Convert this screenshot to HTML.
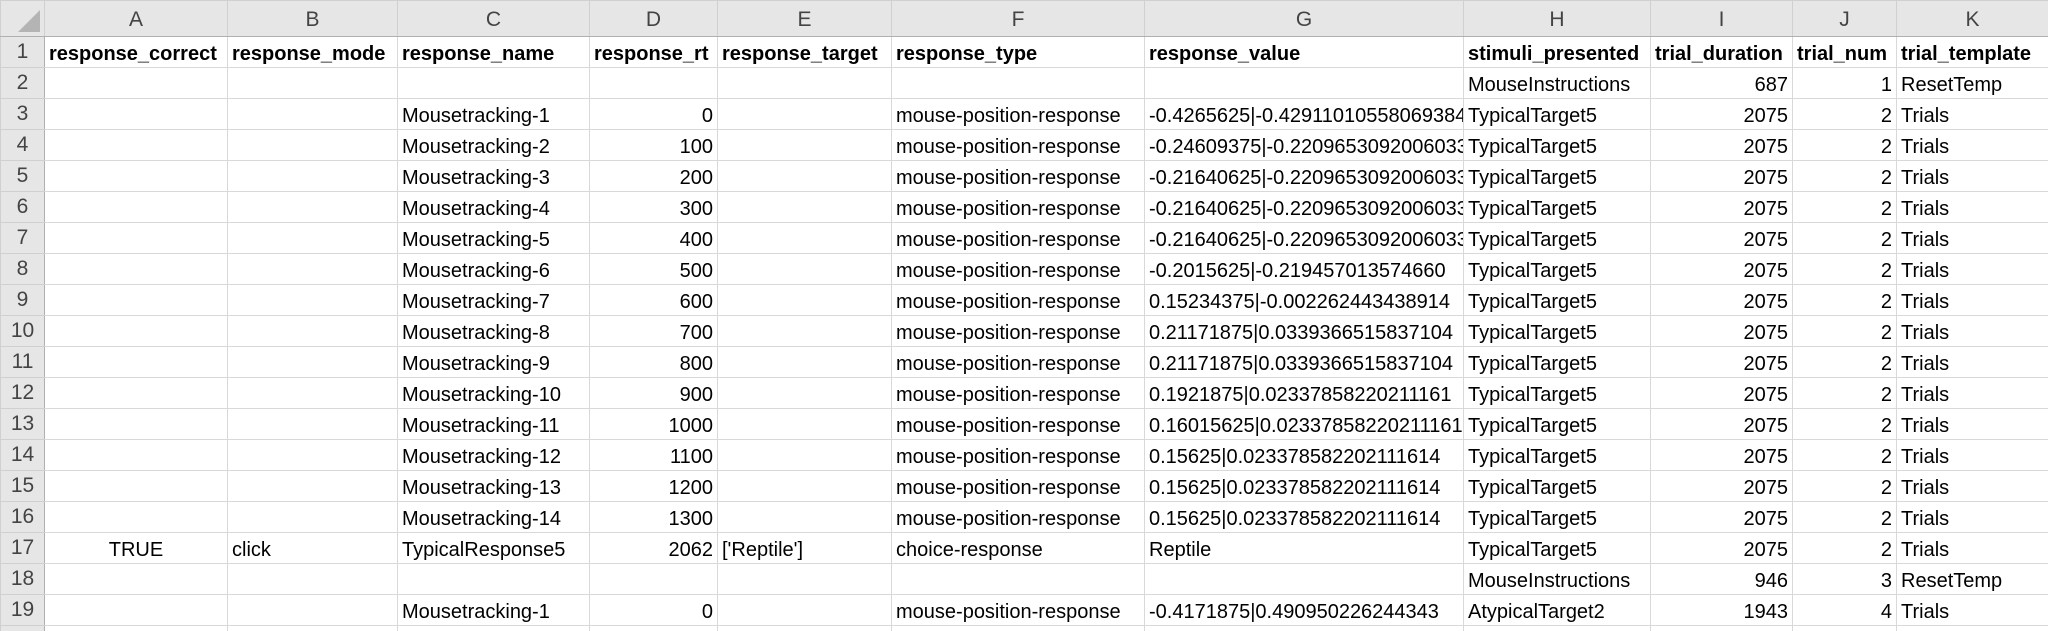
<!DOCTYPE html>
<html><head><meta charset="utf-8"><style>
html,body{margin:0;padding:0;background:#fff;width:2048px;height:631px;overflow:hidden}
table{width:2048px;border-collapse:collapse;table-layout:fixed;font-family:"Liberation Sans",Arial,sans-serif;font-size:20px;color:#000}
td{height:31px;padding:3px 4px 0 4px;border:1px solid #d9d9d9;white-space:nowrap;overflow:hidden;text-overflow:clip;box-sizing:border-box;line-height:26px}
tr.h td{height:36px;background:#e6e6e6;color:#444;text-align:center;border:1px solid #d0d0d0;border-bottom:1px solid #b0b0b0;font-size:21px}
td.r{background:#e6e6e6;color:#444;text-align:center;border:1px solid #d0d0d0;border-right:1px solid #b0b0b0;padding:0;font-size:21px}
tr.b td{font-weight:bold}
tr.b td.r{font-weight:normal}
.n{text-align:right}
.c{text-align:center}
.corner{position:relative}
.corner:after{content:"";position:absolute;right:4px;bottom:4px;border-style:solid;border-width:0 0 22px 22px;border-color:transparent transparent #b4b4b4 transparent}
</style></head><body>
<table>
<colgroup><col style="width:44px"><col style="width:183px"><col style="width:170px"><col style="width:192px"><col style="width:128px"><col style="width:174px"><col style="width:253px"><col style="width:319px"><col style="width:187px"><col style="width:142px"><col style="width:104px"><col style="width:152px"></colgroup>
<tr class="h"><td class="corner"></td><td>A</td><td>B</td><td>C</td><td>D</td><td>E</td><td>F</td><td>G</td><td>H</td><td>I</td><td>J</td><td>K</td></tr>
<tr class="b"><td class="r">1</td><td>response_correct</td><td>response_mode</td><td>response_name</td><td>response_rt</td><td>response_target</td><td>response_type</td><td>response_value</td><td>stimuli_presented</td><td>trial_duration</td><td>trial_num</td><td>trial_template</td></tr>
<tr><td class="r">2</td><td></td><td></td><td></td><td></td><td></td><td></td><td></td><td>MouseInstructions</td><td class="n">687</td><td class="n">1</td><td>ResetTemp</td></tr>
<tr><td class="r">3</td><td></td><td></td><td>Mousetracking-1</td><td class="n">0</td><td></td><td>mouse-position-response</td><td>-0.4265625|-0.429110105580693846</td><td>TypicalTarget5</td><td class="n">2075</td><td class="n">2</td><td>Trials</td></tr>
<tr><td class="r">4</td><td></td><td></td><td>Mousetracking-2</td><td class="n">100</td><td></td><td>mouse-position-response</td><td>-0.24609375|-0.22096530920060331</td><td>TypicalTarget5</td><td class="n">2075</td><td class="n">2</td><td>Trials</td></tr>
<tr><td class="r">5</td><td></td><td></td><td>Mousetracking-3</td><td class="n">200</td><td></td><td>mouse-position-response</td><td>-0.21640625|-0.22096530920060331</td><td>TypicalTarget5</td><td class="n">2075</td><td class="n">2</td><td>Trials</td></tr>
<tr><td class="r">6</td><td></td><td></td><td>Mousetracking-4</td><td class="n">300</td><td></td><td>mouse-position-response</td><td>-0.21640625|-0.22096530920060331</td><td>TypicalTarget5</td><td class="n">2075</td><td class="n">2</td><td>Trials</td></tr>
<tr><td class="r">7</td><td></td><td></td><td>Mousetracking-5</td><td class="n">400</td><td></td><td>mouse-position-response</td><td>-0.21640625|-0.22096530920060331</td><td>TypicalTarget5</td><td class="n">2075</td><td class="n">2</td><td>Trials</td></tr>
<tr><td class="r">8</td><td></td><td></td><td>Mousetracking-6</td><td class="n">500</td><td></td><td>mouse-position-response</td><td>-0.2015625|-0.219457013574660</td><td>TypicalTarget5</td><td class="n">2075</td><td class="n">2</td><td>Trials</td></tr>
<tr><td class="r">9</td><td></td><td></td><td>Mousetracking-7</td><td class="n">600</td><td></td><td>mouse-position-response</td><td>0.15234375|-0.002262443438914</td><td>TypicalTarget5</td><td class="n">2075</td><td class="n">2</td><td>Trials</td></tr>
<tr><td class="r">10</td><td></td><td></td><td>Mousetracking-8</td><td class="n">700</td><td></td><td>mouse-position-response</td><td>0.21171875|0.0339366515837104</td><td>TypicalTarget5</td><td class="n">2075</td><td class="n">2</td><td>Trials</td></tr>
<tr><td class="r">11</td><td></td><td></td><td>Mousetracking-9</td><td class="n">800</td><td></td><td>mouse-position-response</td><td>0.21171875|0.0339366515837104</td><td>TypicalTarget5</td><td class="n">2075</td><td class="n">2</td><td>Trials</td></tr>
<tr><td class="r">12</td><td></td><td></td><td>Mousetracking-10</td><td class="n">900</td><td></td><td>mouse-position-response</td><td>0.1921875|0.02337858220211161</td><td>TypicalTarget5</td><td class="n">2075</td><td class="n">2</td><td>Trials</td></tr>
<tr><td class="r">13</td><td></td><td></td><td>Mousetracking-11</td><td class="n">1000</td><td></td><td>mouse-position-response</td><td>0.16015625|0.02337858220211161</td><td>TypicalTarget5</td><td class="n">2075</td><td class="n">2</td><td>Trials</td></tr>
<tr><td class="r">14</td><td></td><td></td><td>Mousetracking-12</td><td class="n">1100</td><td></td><td>mouse-position-response</td><td>0.15625|0.023378582202111614</td><td>TypicalTarget5</td><td class="n">2075</td><td class="n">2</td><td>Trials</td></tr>
<tr><td class="r">15</td><td></td><td></td><td>Mousetracking-13</td><td class="n">1200</td><td></td><td>mouse-position-response</td><td>0.15625|0.023378582202111614</td><td>TypicalTarget5</td><td class="n">2075</td><td class="n">2</td><td>Trials</td></tr>
<tr><td class="r">16</td><td></td><td></td><td>Mousetracking-14</td><td class="n">1300</td><td></td><td>mouse-position-response</td><td>0.15625|0.023378582202111614</td><td>TypicalTarget5</td><td class="n">2075</td><td class="n">2</td><td>Trials</td></tr>
<tr><td class="r">17</td><td class="c">TRUE</td><td>click</td><td>TypicalResponse5</td><td class="n">2062</td><td>['Reptile']</td><td>choice-response</td><td>Reptile</td><td>TypicalTarget5</td><td class="n">2075</td><td class="n">2</td><td>Trials</td></tr>
<tr><td class="r">18</td><td></td><td></td><td></td><td></td><td></td><td></td><td></td><td>MouseInstructions</td><td class="n">946</td><td class="n">3</td><td>ResetTemp</td></tr>
<tr><td class="r">19</td><td></td><td></td><td>Mousetracking-1</td><td class="n">0</td><td></td><td>mouse-position-response</td><td>-0.4171875|0.490950226244343</td><td>AtypicalTarget2</td><td class="n">1943</td><td class="n">4</td><td>Trials</td></tr>
<tr><td class="r">20</td><td></td><td></td><td></td><td></td><td></td><td></td><td></td><td></td><td></td><td></td><td></td></tr>
</table>
</body></html>
